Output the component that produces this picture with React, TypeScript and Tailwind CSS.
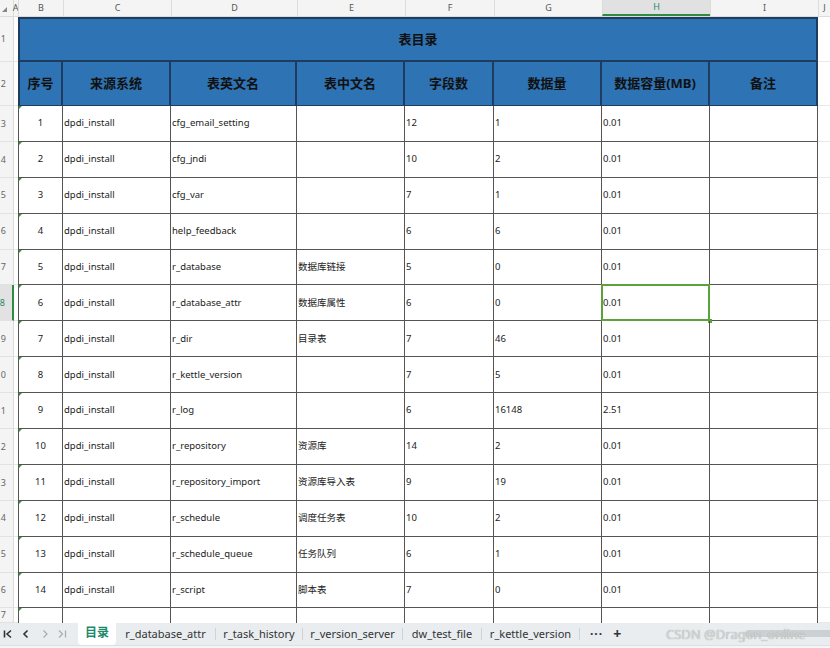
import React from "react";

const cols = [
  { k: "B", w: 45 },
  { k: "C", w: 108 },
  { k: "D", w: 126 },
  { k: "E", w: 108 },
  { k: "F", w: 89 },
  { k: "G", w: 108 },
  { k: "H", w: 108 },
  { k: "I", w: 108 },
];

const headers = ["序号", "来源系统", "表英文名", "表中文名", "字段数", "数据量", "数据容量(MB)", "备注"];

const data: string[][] = [
  ["1", "dpdi_install", "cfg_email_setting", "", "12", "1", "0.01"],
  ["2", "dpdi_install", "cfg_jndi", "", "10", "2", "0.01"],
  ["3", "dpdi_install", "cfg_var", "", "7", "1", "0.01"],
  ["4", "dpdi_install", "help_feedback", "", "6", "6", "0.01"],
  ["5", "dpdi_install", "r_database", "数据库链接", "5", "0", "0.01"],
  ["6", "dpdi_install", "r_database_attr", "数据库属性", "6", "0", "0.01"],
  ["7", "dpdi_install", "r_dir", "目录表", "7", "46", "0.01"],
  ["8", "dpdi_install", "r_kettle_version", "", "7", "5", "0.01"],
  ["9", "dpdi_install", "r_log", "", "6", "16148", "2.51"],
  ["10", "dpdi_install", "r_repository", "资源库", "14", "2", "0.01"],
  ["11", "dpdi_install", "r_repository_import", "资源库导入表", "9", "19", "0.01"],
  ["12", "dpdi_install", "r_schedule", "调度任务表", "10", "2", "0.01"],
  ["13", "dpdi_install", "r_schedule_queue", "任务队列", "6", "1", "0.01"],
  ["14", "dpdi_install", "r_script", "脚本表", "7", "0", "0.01"],
];

const font = { fontFamily: '"Noto Sans", "Noto Sans CJK SC", sans-serif' };

function RowHead({ n, h, active }: { n: string; h: string; active?: boolean }) {
  return (
    <div className={`flex shrink-0 ${h}`}>
      <div
        className={`w-[14px] shrink-0 overflow-hidden flex items-center justify-end pr-[7px] border-b border-[#e2e2e2] text-[9px] ${
          active ? "bg-[#e2e2e2] text-[#1d8a6b] border-r-2 border-r-[#2e8b3f]" : "bg-[#f4f4f4] text-[#666] border-r border-r-[#dcdcdc]"
        }`}
      >
        <span className="whitespace-nowrap">{n}</span>
      </div>
      <div className="w-[4px] shrink-0 border-b border-[#e6e6e6] bg-white" />
    </div>
  );
}

function Tail({ h }: { h: string }) {
  return <div className={`w-[12px] shrink-0 ${h} border-b border-[#e8e8e8] bg-white`} />;
}

export default function App() {
  return (
    <div className="w-[830px] h-[648px] overflow-hidden bg-white flex flex-col text-[#222]" style={font}>
      {/* column header */}
      <div className="flex h-[17px] shrink-0 bg-[#f4f4f4] border-b border-[#dcdcdc]">
        <div className="w-[14px] shrink-0 flex items-end pl-[2px] pb-[4px] border-r border-[#dcdcdc]">
          <div className="w-0 h-0 border-l-[5px] border-l-transparent border-b-[5px] border-b-[#888]" />
        </div>
        <div className="w-[4px] shrink-0 flex items-center justify-center text-[9px] text-[#555] overflow-visible">
          <span className="-ml-[1px]">A</span>
        </div>
        {cols.map((c) => (
          <div
            key={c.k}
            className={`shrink-0 flex items-center justify-center text-[9px] border-l border-[#dcdcdc] ${
              c.k === "H" ? "bg-[#e1e1e1] text-[#1d8a6b] border-b-2 border-b-[#2e8b3f]" : "text-[#555]"
            }`}
            style={{ width: c.w }}
          >
            {c.k}
          </div>
        ))}
        <div className="w-[12px] shrink-0 flex items-center justify-center text-[9px] text-[#555] border-l border-[#dcdcdc]">
          J
        </div>
      </div>

      {/* row 1 title */}
      <div className="flex h-[45px] shrink-0">
        <RowHead n="1" h="h-[45px]" />
        <div className="w-[800px] shrink-0 h-[45px] bg-[#2e73b4] border-2 border-[#1d3c5f] flex items-center justify-center text-[13px] font-bold text-[#111]">
          表目录
        </div>
        <Tail h="h-[45px]" />
      </div>

      {/* row 2 headers */}
      <div className="flex h-[44px] shrink-0">
        <RowHead n="2" h="h-[44px]" />
        <div className="flex w-[800px] shrink-0 h-[44px] bg-[#2e73b4] border-x-2 border-b border-[#1d3c5f]">
          {cols.map((c, i) => (
            <div
              key={c.k}
              className={`shrink-0 flex items-center justify-center text-[13px] font-bold text-[#111] ${
                i < cols.length - 1 ? "border-r-2 border-[#1d3c5f]" : ""
              }`}
              style={{ width: i === 0 ? c.w - 2 : i === cols.length - 1 ? c.w - 2 : c.w }}
            >
              {headers[i]}
            </div>
          ))}
        </div>
        <Tail h="h-[44px]" />
      </div>

      {/* data rows */}
      {data.map((r, ri) => (
        <div key={ri} className="flex h-[35.9px] shrink-0">
          <RowHead n={String(ri + 3)} h="h-[35.9px]" active={ri === 5} />
          <div className="flex w-[800px] shrink-0 h-[35.9px] border-l border-b border-[#555] text-[9.5px]">
            {cols.map((c, ci) => {
              const val = ci < r.length ? r[ci] : "";
              const selected = ri === 5 && c.k === "H";
              return (
                <div
                  key={c.k}
                  className={`relative shrink-0 flex items-center ${ci === 0 ? "justify-center" : "pl-[1px]"} border-r border-[#555]`}
                  style={{ width: ci === 0 ? c.w - 1 : c.w }}
                >
                  {ci === 0 && (
                    <div className="absolute left-0 top-0 w-0 h-0 border-t-[3px] border-t-[#2e9a3a] border-r-[3px] border-r-transparent" />
                  )}
                  {selected && (
                    <>
                      <div className="absolute -left-[1px] -top-[1px] -right-[1px] -bottom-[1px] border-2 border-[#5aa33a]" />
                      <div className="absolute -right-[3px] -bottom-[3px] w-[4px] h-[4px] bg-[#5aa33a]" />
                    </>
                  )}
                  <span className="whitespace-nowrap">{val}</span>
                </div>
              );
            })}
          </div>
          <Tail h="h-[35.9px]" />
        </div>
      ))}

      {/* row 17 partial */}
      <div className="flex flex-1">
        <RowHead n="17" h="h-full" />
        <div className="flex w-[800px] shrink-0 border-l border-[#555]">
          {cols.map((c, ci) => (
            <div
              key={c.k}
              className="relative shrink-0 border-r border-[#555]"
              style={{ width: ci === 0 ? c.w - 1 : c.w }}
            >
              {ci === 0 && (
                <div className="absolute left-0 top-0 w-0 h-0 border-t-[3px] border-t-[#2e9a3a] border-r-[3px] border-r-transparent" />
              )}
            </div>
          ))}
        </div>
        <Tail h="h-full" />
      </div>

      {/* tab bar */}
      <div className="relative h-[22px] shrink-0 bg-[#e9edf0] flex items-stretch text-[11px] text-[#333]">
        <div className="flex items-center w-[78px] shrink-0 pl-[3px]">
          <svg width="9" height="10" viewBox="0 0 9 10" className="mr-[10px]">
            <path d="M1.5 1.5v7" stroke="#333" strokeWidth="1.6" fill="none" />
            <path d="M8 1.5L4 5l4 3.5" stroke="#333" strokeWidth="1.6" fill="none" />
          </svg>
          <svg width="7" height="10" viewBox="0 0 7 10" className="mr-[13px]">
            <path d="M5.5 1.5L2 5l3.5 3.5" stroke="#333" strokeWidth="1.6" fill="none" />
          </svg>
          <svg width="7" height="10" viewBox="0 0 7 10" className="mr-[9px]">
            <path d="M1.5 1.5L5 5 1.5 8.5" stroke="#aaa" strokeWidth="1.2" fill="none" />
          </svg>
          <svg width="9" height="10" viewBox="0 0 9 10">
            <path d="M1 1.5L4.5 5 1 8.5" stroke="#aaa" strokeWidth="1.2" fill="none" />
            <path d="M7.5 1.5v7" stroke="#aaa" strokeWidth="1.2" fill="none" />
          </svg>
        </div>
        <div className="w-[38px] shrink-0 bg-white rounded-b-[4px] flex items-center justify-center text-[#1d8a6b] font-bold text-[12px] -mt-[1px]">
          目录
        </div>
        {[
          { t: "r_database_attr", w: 100 },
          { t: "r_task_history", w: 87 },
          { t: "r_version_server", w: 100 },
          { t: "dw_test_file", w: 79 },
          { t: "r_kettle_version", w: 98 },
        ].map((tab) => (
          <div key={tab.t} className="flex items-center shrink-0" style={{ width: tab.w }}>
            <span className="flex-1 text-center whitespace-nowrap">{tab.t}</span>
            <div className="w-px h-[12px] bg-[#cfd3d6]" />
          </div>
        ))}
        <div className="flex items-center pl-[10px] gap-[10px] text-[12px] font-bold text-[#333]">
          <span className="tracking-[1px]">···</span>
          <span className="text-[14px] leading-none">+</span>
        </div>
        <div className="absolute right-0 top-[7px] w-[85px] h-[7px] rounded-l-full bg-[#cdd0d3]" />
        <div
          className="absolute left-[666px] top-[2px] text-[13px] text-[#d6d6d6] whitespace-nowrap"
          style={{ textShadow: "0 0 1px #9a9a9a" }}
        >
          CSDN @Dragon_online
        </div>
      </div>

      {/* status bar */}
      <div className="h-[7px] shrink-0 bg-[#f3f5f7] border-t border-[#dde1e4] flex items-end overflow-hidden">
        <div className="ml-[8px] w-[9px] h-[4px] border border-b-0 border-[#666]" />
        <div className="ml-[40px] w-[16px] h-[2px] bg-[#999]" />
        <div className="ml-[44px] w-[10px] h-[3px] bg-[#777]" />
        <div className="ml-[26px] w-[9px] h-[4px] border border-b-0 border-[#666]" />
      </div>
    </div>
  );
}
